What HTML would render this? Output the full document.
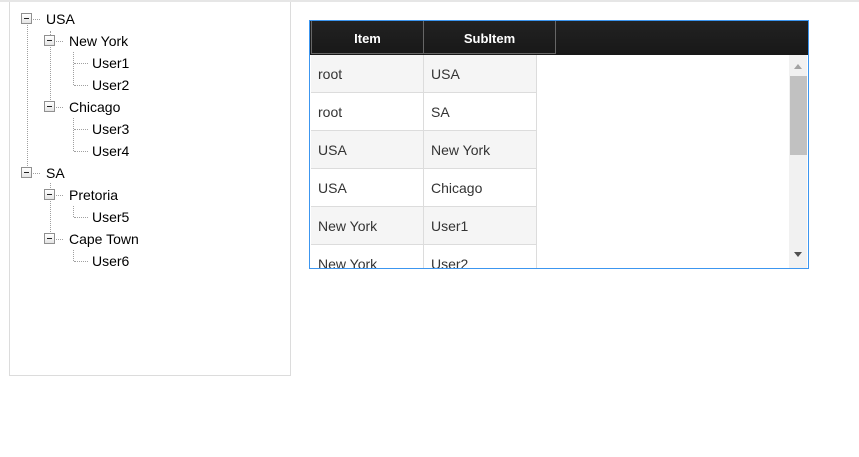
<!DOCTYPE html>
<html><head><style>
body{margin:0;width:859px;height:457px;background:#fff;position:relative;overflow:hidden;font-family:"Liberation Sans",Arial,sans-serif}
.topline{position:absolute;left:0;top:0;width:859px;height:2px;background:#e6e6e6}
.tree{position:absolute;left:9px;top:2px;width:280px;height:373px;border:1px solid #dcdcdc;border-top:none}
.b{position:absolute;width:9px;height:9px;border:1px solid #909090;background:linear-gradient(#fff,#e4e4e4)}
.b:after{content:"";position:absolute;left:2px;top:4px;width:5px;height:1px;background:#222}
.v{position:absolute;width:0;border-left:1px dotted #a0a0a0}
.h{position:absolute;height:0;border-top:1px dotted #a0a0a0}
.t{position:absolute;font-size:14px;color:#000;line-height:16px}
.grid{position:absolute;left:309px;top:20px;width:498px;height:247px;border:1px solid #3c96f0;overflow:hidden;font-family:"Liberation Sans","DejaVu Sans",sans-serif}
.hd{position:absolute;left:0;top:0;width:498px;height:34px;background:linear-gradient(#222,#181818)}
.hc{position:absolute;top:0;height:32px;border:1px solid #666;border-top:none;color:#fff;font-weight:bold;font-size:13px;line-height:36px;text-align:center}
.r{position:absolute;left:1px;width:226px;height:37px;border-bottom:1px solid #dcdcdc}
.c{position:absolute;top:0;height:37px;line-height:38px;font-size:14px;color:#333;padding-left:7px;box-sizing:border-box;border-right:1px solid #dcdcdc}
.sb{position:absolute;left:479px;top:34px;width:18px;height:213px;background:#f1f1f1}
</style></head><body>
<div class="topline"></div>
<div class="tree"></div>
<!-- tree lines -->
<div class="v" style="left:27px;top:25px;height:143px"></div>
<div class="v" style="left:50px;top:31px;height:8px"></div>
<div class="v" style="left:50px;top:47px;height:55px"></div>
<div class="v" style="left:73px;top:52px;height:33px"></div>
<div class="v" style="left:73px;top:118px;height:33px"></div>
<div class="v" style="left:50px;top:183px;height:51px"></div>
<div class="v" style="left:73px;top:206px;height:11px"></div>
<div class="v" style="left:73px;top:250px;height:11px"></div>
<div class="h" style="left:33px;top:19px;width:7px"></div>
<div class="h" style="left:33px;top:173px;width:7px"></div>
<div class="h" style="left:56px;top:41px;width:7px"></div>
<div class="h" style="left:56px;top:107px;width:7px"></div>
<div class="h" style="left:56px;top:195px;width:7px"></div>
<div class="h" style="left:56px;top:239px;width:7px"></div>
<div class="h" style="left:74px;top:63px;width:14px"></div>
<div class="h" style="left:74px;top:85px;width:14px"></div>
<div class="h" style="left:74px;top:129px;width:14px"></div>
<div class="h" style="left:74px;top:151px;width:14px"></div>
<div class="h" style="left:74px;top:217px;width:14px"></div>
<div class="h" style="left:74px;top:261px;width:14px"></div>
<div class="b" style="left:21px;top:13px"></div>
<div class="b" style="left:21px;top:167px"></div>
<div class="b" style="left:44px;top:35px"></div>
<div class="b" style="left:44px;top:101px"></div>
<div class="b" style="left:44px;top:189px"></div>
<div class="b" style="left:44px;top:233px"></div>
<div class="t" style="left:46px;top:11px">USA</div>
<div class="t" style="left:69px;top:33px">New York</div>
<div class="t" style="left:92px;top:55px">User1</div>
<div class="t" style="left:92px;top:77px">User2</div>
<div class="t" style="left:69px;top:99px">Chicago</div>
<div class="t" style="left:92px;top:121px">User3</div>
<div class="t" style="left:92px;top:143px">User4</div>
<div class="t" style="left:46px;top:165px">SA</div>
<div class="t" style="left:69px;top:187px">Pretoria</div>
<div class="t" style="left:92px;top:209px">User5</div>
<div class="t" style="left:69px;top:231px">Cape Town</div>
<div class="t" style="left:92px;top:253px">User6</div>

<div class="grid">
<div class="hd">
<div class="hc" style="left:1px;width:111px">Item</div>
<div class="hc" style="left:113px;width:131px">SubItem</div>
</div>
<div class="r" style="top:34px;background:#f5f5f5"><div class="c" style="left:0;width:113px">root</div><div class="c" style="left:113px;width:113px">USA</div></div>
<div class="r" style="top:72px;background:#fff"><div class="c" style="left:0;width:113px">root</div><div class="c" style="left:113px;width:113px">SA</div></div>
<div class="r" style="top:110px;background:#f5f5f5"><div class="c" style="left:0;width:113px">USA</div><div class="c" style="left:113px;width:113px">New York</div></div>
<div class="r" style="top:148px;background:#fff"><div class="c" style="left:0;width:113px">USA</div><div class="c" style="left:113px;width:113px">Chicago</div></div>
<div class="r" style="top:186px;background:#f5f5f5"><div class="c" style="left:0;width:113px">New York</div><div class="c" style="left:113px;width:113px">User1</div></div>
<div class="r" style="top:224px;background:#fff"><div class="c" style="left:0;width:113px">New York</div><div class="c" style="left:113px;width:113px">User2</div></div>
<div class="sb">
<div style="position:absolute;left:5px;top:9px;width:0;height:0;border-left:4px solid transparent;border-right:4px solid transparent;border-bottom:5px solid #a3a3a3"></div>
<div style="position:absolute;left:1px;top:21px;width:17px;height:79px;background:#c1c1c1"></div>
<div style="position:absolute;left:5px;top:197px;width:0;height:0;border-left:4px solid transparent;border-right:4px solid transparent;border-top:5px solid #505050"></div>
</div>
</div>
</body></html>
